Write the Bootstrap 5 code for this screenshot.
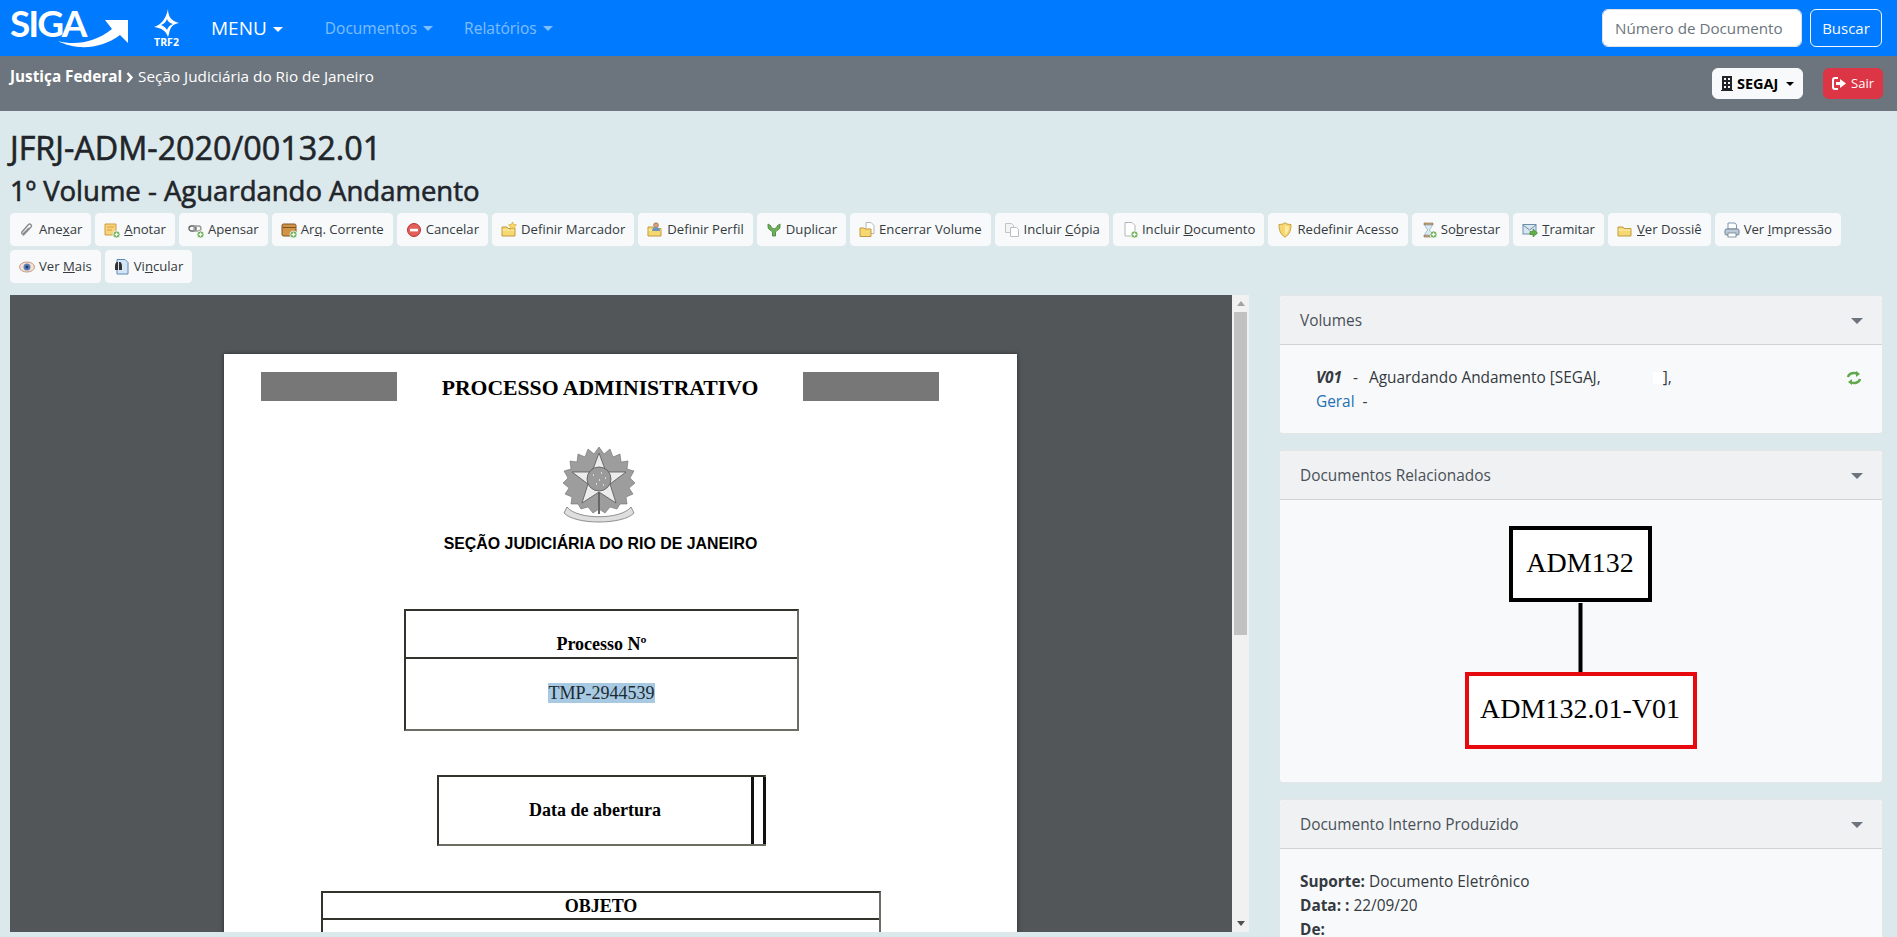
<!DOCTYPE html>
<html lang="pt-BR">
<head>
    <meta charset="UTF-8">
    <meta name="viewport" content="width=device-width, initial-scale=1.0">
    <title>SIGA - Volume</title>
    <link href="https://cdn.jsdelivr.net/npm/bootstrap@5.3.0/dist/css/bootstrap.min.css" rel="stylesheet">
    <style>
        html, body { height: 100%; overflow: hidden; }
        body { background: #dbe8ec; font-family: "Open Sans", "Noto Sans", sans-serif; font-size: 15.4px; line-height: 24px; color: #212529; }

        /* barra superior */
        .topo { height: 56px; background: #007bff; padding: 0 15px 0 10px; }
        .logo-siga { position: relative; width: 120px; height: 50px; color: #fff; }
        .logo-siga span { display: block; font-family: Lato, sans-serif; font-size: 37px; line-height: 38px; font-weight: 700; letter-spacing: -2px; margin-top: 1px; }
        .logo-siga svg { position: absolute; left: 0; top: 0; }
        .topo .nav-link { padding: 0; font-size: 15.5px; color: rgba(255,255,255,.5); }
        .topo .dropdown-toggle::after { margin-left: 6px; border-width: 5.500px 5.500px 0; vertical-align: 3px; }
        .topo .menu-link { font-size: 19px; color: #fff; }
        .topo .form-control { width: 200px; height: 38px; font-size: 15.2px; padding: 6px 12px; }
        .topo .form-control::placeholder { color: #6c757d; }
        .topo .btn { height: 38px; width: 72px; font-size: 15px; padding: 0; }

        .faixa { height: 55px; background: #6c757d; color: #fff; padding: 12px 14px 0 10px; font-size: 15.3px; }
        .faixa .local { margin-top: -2px; line-height: 21px; }
        .faixa .btn { height: 31px; font-size: 13px; padding: 0 8px; display: inline-flex; align-items: center; gap: 4px; }
        .faixa .btn-light { font-size: 14.5px; }

        /* conteudo */
        .principal { padding: 17px 14px 0 10px; }
        .principal h2 { font-size: 32.3px; line-height: 38px; font-weight: 400; -webkit-text-stroke: .6px #212529; margin-bottom: 8px; }
        .principal h3 { font-size: 27.500px; line-height: 34px; font-weight: 400; -webkit-text-stroke: .6px #212529; margin-bottom: 5px; }
        .acoes { gap: 4px; margin-bottom: 12px; }
        .acoes .btn { height: 33px; padding: 0 8px; font-size: 13.15px; line-height: 31px; background: #f8f9fa; border-color: #f8f9fa; color: #343a40; border-radius: 4px; display: inline-flex; align-items: center; gap: 4px; }
        .acoes svg { width: 16px; height: 16px; flex: none; }

        .corpo { gap: 30px; }
        .visor { flex: 1; height: 637px; overflow: hidden; }
        .visor-pdf { flex: 1; background: #525659; padding: 59px 0 0 214px; overflow: hidden; }
        .barra { width: 17px; background: #f1f1f1; }
        .barra i { display: block; width: 13px; height: 323px; margin: 0 2px; background: #c1c1c1; }
        .seta { height: 17px; flex: none; }
        .seta::before { content: ""; border: 4px solid transparent; }
        .seta-cima::before { border-top: 0; border-bottom: 5px solid #a3a3a3; }
        .seta-baixo::before { border-bottom: 0; border-top: 5px solid #505050; }

        .folha { width: 793px; height: 800px; background: #fff; padding-top: 18px; font-family: "Liberation Serif", serif; font-weight: 700; color: #000; box-shadow: 0 0 4px rgba(0,0,0,.5); }
        .folha-cab { padding: 0 77px 0 37px; height: 29px; }
        .folha-cab i { display: block; width: 136px; height: 29px; background: #777; flex: none; }
        .folha-cab span { font-size: 21.7px; line-height: 32px; width: 406px; text-align: center; flex: none; }
        .brasao { display: block; margin: 46px 0 0 339px; }
        .secao { width: 753px; text-align: center; font-family: "Liberation Sans", sans-serif; font-size: 15.9px; line-height: 20px; margin-top: 11px; }
        .caixa { border: 2px solid #33332c; border-right-color: #6d6d64; border-bottom-color: #6d6d64; text-align: center; font-size: 18px; }
        .caixa-numero { width: 395px; height: 122px; margin: 55px 0 0 180px; }
        .caixa-numero div:first-child { height: 48px; padding-top: 20px; line-height: 26px; border-bottom: 2px solid #33332c; }
        .caixa-numero div:last-child { padding-top: 22px; line-height: 24px; font-weight: 400; }
        .caixa-numero mark { padding: 0; background: #a7c9e2; color: #1c2b33; }
        .caixa-data { width: 329px; height: 71px; margin: 44px 0 0 213px; }
        .caixa-data div { width: 315px; height: 67px; line-height: 67px; border-right: 3px solid #111; }
        .caixa-data b { display: block; width: 12px; margin-left: 315px; margin-top: -67px; height: 67px; border-right: 3px solid #111; }
        .caixa-objeto { width: 560px; margin: 45px 0 0 97px; }
        .caixa-objeto div:first-child { height: 27px; line-height: 27px; border-bottom: 2px solid #33332c; }
        .caixa-objeto div:last-child { height: 80px; }

        /* coluna lateral */
        .lateral { width: 604px; flex: none; }
        .cartao { background: #f8f9fa; border-color: rgba(0,0,0,.08); border-radius: 4px; margin-bottom: 16px; }
        .cartao .card-header { height: 49px; padding: 13px 20px 11px; line-height: 24px; background: #f0f1f3; border-bottom-color: rgba(0,0,0,.125); color: #495057; display: flex; justify-content: space-between; align-items: center; }
        .cartao .card-header::after { content: ""; border: 6px solid transparent; border-top: 6px solid #6c757d; border-bottom: 0; margin-right: -1px; }
        .cartao .card-body { padding: 21px 20px 19px; color: #343a40; }
        .volume { padding-left: 16px; }
        .volume a { text-decoration: none; color: #2470b3; }
        .volume .traco { margin: 0 11px; }
        .tarja { display: inline-block; width: 10px; height: 12px; background: #fff; margin-left: 52px; vertical-align: -1px; }
        .grafo text { font-family: "Liberation Serif", serif; font-size: 28px; text-anchor: middle; fill: #000; }
        .grafo-corpo { height: 282px; padding: 0 !important; }
    </style>
</head>
<body>
    <nav class="topo d-flex align-items-center">
        <div class="logo-siga">
            <span>SIGA</span>
            <svg width="120" height="50" viewBox="10 3 120 50">
                <path fill="#fff" d="M58 41C76 46 96 42 112 29L105 20H128V43L120 35C100 50 75 50 58 41Z"/>
            </svg>
        </div>
        <svg width="30" height="44" viewBox="151 7 30 44" style="margin-left:22px">
            <path fill="#fff" fill-rule="evenodd" d="M167 10C167 17 170 22 178 24C172 25 169 28 168 35L167 38C165 32 161 29 153 28C160 26 165 20 167 10ZM166 20C165 23 163 25 160 26C163 27 165 29 166 31C167 28 169 26 172 25C169 24 167 23 166 20Z"/>
            <text x="165.500" y="47" font-size="10.500" font-weight="700" fill="#fff" text-anchor="middle" font-family="Open Sans, sans-serif">TRF2</text>
        </svg>
        <a class="nav-link menu-link dropdown-toggle" href="#" style="margin-left:29px">MENU</a>
        <a class="nav-link dropdown-toggle" href="#" style="margin-left:42px">Documentos</a>
        <a class="nav-link dropdown-toggle" href="#" style="margin-left:31px">Relatórios</a>
        <form class="d-flex gap-2 ms-auto">
            <input class="form-control" type="text" placeholder="Número de Documento">
            <button class="btn btn-outline-light" type="button">Buscar</button>
        </form>
    </nav>

    <div class="faixa d-flex justify-content-between align-items-start">
        <div class="local">
            <strong>Justiça Federal</strong>
            <svg width="8" height="11" viewBox="0 0 8 11"><path d="M1.500 1l4 4.500-4 4.500" fill="none" stroke="#fff" stroke-width="2.400"/></svg>
            Seção Judiciária do Rio de Janeiro
        </div>
        <div class="d-flex" style="gap:20px">
            <button class="btn btn-light dropdown-toggle fw-bold" type="button">
                <svg width="12" height="15" viewBox="0 0 12 15"><path fill="#212529" fill-rule="evenodd" d="M1 0h10v14h1v1H0v-1h1zM3 2v2h2V2zm4 0v2h2V2zM3 6v2h2V6zm4 0v2h2V6zM3 10v2h2v-2zm4 0v2h2v-2z"/></svg>
                SEGAJ
            </button>
            <button class="btn btn-danger" type="button">
                <svg width="15" height="13" viewBox="0 0 15 13"><path fill="#fff" d="M6 0H3a3 3 0 0 0-3 3v7a3 3 0 0 0 3 3h3v-2H3a1 1 0 0 1-1-1V3a1 1 0 0 1 1-1h3zM8 2v3H4v3h4v3l6-4.500z"/></svg>
                Sair
            </button>
        </div>
    </div>

    <main class="principal">
        <h2>JFRJ-ADM-2020/00132.01</h2>
        <h3>1º Volume - Aguardando Andamento</h3>

        <svg width="0" height="0" class="position-absolute">
            <defs>
                <g id="mais"><circle cx="12.500" cy="12.500" r="3.500" fill="#5aa845" stroke="#fff" stroke-width=".8"/><path d="M12.500 10.500v4M10.500 12.500h4" stroke="#fff" stroke-width="1.300"/></g>
                <g id="pasta"><path d="M1 5h5l1 1.500h7V14H1z" fill="#f6d873" stroke="#c39a3f"/><path d="M1.500 8h12" stroke="#fbeeb5"/></g>
            </defs>
        </svg>

        <div class="acoes d-flex flex-wrap">
            <a class="btn" href="#"><svg viewBox="0 0 16 16"><path d="M4 13.500 12 5c1.500-2-1-4-2.500-2.500L3 10c-1 1.500.5 2.500 1.500 1.500L10 6" fill="none" stroke="#8a8a8a" stroke-width="1.400"/></svg><span>Ane<u>x</u>ar</span></a>
            <a class="btn" href="#"><svg viewBox="0 0 16 16"><path d="M1 2h11v11H1z" fill="#f7d47f" stroke="#cd9c3e"/><path d="M3 5h7M3 8h5" stroke="#d99f3c"/><use href="#mais"/></svg><span><u>A</u>notar</span></a>
            <a class="btn" href="#"><svg viewBox="0 0 16 16"><rect x="1" y="4" width="7" height="5" rx="2.500" fill="none" stroke="#666" stroke-width="1.400"/><rect x="6" y="4" width="7" height="5" rx="2.500" fill="none" stroke="#999" stroke-width="1.400"/><use href="#mais"/></svg>Apensar</a>
            <a class="btn" href="#"><svg viewBox="0 0 16 16"><rect x="1" y="2" width="14" height="12" rx="1.500" fill="#cf9445" stroke="#7f5420"/><path d="M1.500 5.500h13" stroke="#7f5420"/><use href="#mais"/></svg><span>Ar<u>q</u>. Corrente</span></a>
            <a class="btn" href="#"><svg viewBox="0 0 16 16"><circle cx="8" cy="8" r="6.500" fill="#e2605a" stroke="#b8352f"/><rect x="4" y="6.800" width="8" height="2.600" fill="#fff"/></svg>Cancelar</a>
            <a class="btn" href="#"><svg viewBox="0 0 16 16"><use href="#pasta"/><path d="M11.500 0l1.200 2.500 2.800.4-2 1.900.5 2.700-2.500-1.300L9 7.500l.5-2.700-2-1.900 2.800-.4z" fill="#fbd95e" stroke="#cb9c2c" stroke-width=".6"/></svg>Definir Marcador</a>
            <a class="btn" href="#"><svg viewBox="0 0 16 16"><use href="#pasta"/><circle cx="9" cy="3.200" r="2.400" fill="#d8a27a" stroke="#8d5c3a" stroke-width=".6"/><path d="M5 9c0-3 2-4 4-4s4 1 4 4z" fill="#6d93b8"/></svg>Definir Perfil</a>
            <a class="btn" href="#"><svg viewBox="0 0 16 16"><path d="M2 2v3c0 3 3.500 3 4.500 5v4h3v-4c1-2 4.500-2 4.500-5V2l-3 2v1c0 1-2 1-3 2-1-1-3-1-3-2V4z" fill="#6db35a" stroke="#437d35" stroke-width=".8"/></svg>Duplicar</a>
            <a class="btn" href="#"><svg viewBox="0 0 16 16"><path d="M7 0.500h5l3 3v8H7z" fill="#fff" stroke="#b7b7b7"/><path d="M1 6h4l1 1h6v7.500H1z" fill="#f6d873" stroke="#c39a3f"/></svg>Encerrar Volume</a>
            <a class="btn" href="#"><svg viewBox="0 0 16 16"><path d="M1.500 1.500h6l2 2v7h-8z" fill="#f4f4f4" stroke="#c4c4c4"/><path d="M6.500 5.500h6l2 2v7h-8z" fill="#fff" stroke="#bdbdbd"/></svg><span>Incluir <u>C</u>ópia</span></a>
            <a class="btn" href="#"><svg viewBox="0 0 16 16"><path d="M3 .500h7l3 3V14H3z" fill="#fff" stroke="#b5b5b5"/><use href="#mais"/></svg><span>Incluir <u>D</u>ocumento</span></a>
            <a class="btn" href="#"><svg viewBox="0 0 16 16"><path d="M8 .800c2 1.500 4 1.700 6 1.700 0 5-1 9.500-6 12.700-5-3.200-6-7.700-6-12.700 2 0 4-.2 6-1.700z" fill="#f5d671" stroke="#c9a13e"/><path d="M8 3v10c3-2.200 3.800-5 4-8.500-1.500 0-2.800-.4-4-1.500z" fill="#fbeaa8"/></svg>Redefinir Acesso</a>
            <a class="btn" href="#"><svg viewBox="0 0 16 16"><path d="M3 1h9v2H3zM3 13h9v2H3z" fill="#c9a37a" stroke="#8b6b48" stroke-width=".6"/><path d="M4 3h7c0 3-2.500 3.500-2.500 5S11 10 11 13H4c0-3 2.500-3.500 2.500-5S4 6 4 3z" fill="#dbe9f2" stroke="#8fa9bd" stroke-width=".7"/><use href="#mais"/></svg><span>So<u>b</u>restar</span></a>
            <a class="btn" href="#"><svg viewBox="0 0 16 16"><rect x="1" y="2.500" width="13" height="9.500" fill="#d7e6f1" stroke="#6f8ea7"/><path d="M1 3l6.500 5L14 3" fill="none" stroke="#6f8ea7"/><path d="M8 9.500h3V7l4.500 4L11 15v-2.500H8z" fill="#62b04c" stroke="#3d7d2c" stroke-width=".6"/></svg><span><u>T</u>ramitar</span></a>
            <a class="btn" href="#"><svg viewBox="0 0 16 16"><use href="#pasta"/></svg><span><u>V</u>er Dossiê</span></a>
            <a class="btn" href="#"><svg viewBox="0 0 16 16"><path d="M4 1h7l1.500 2v4H4z" fill="#fff" stroke="#7d97b3"/><rect x="1" y="7" width="14" height="6" rx="1.500" fill="#bcc9d6" stroke="#6e7f90"/><rect x="4" y="11" width="8" height="4" fill="#fff" stroke="#6e7f90" stroke-width=".8"/></svg><span>Ver <u>I</u>mpressão</span></a>
            <a class="btn" href="#"><svg viewBox="0 0 16 16"><ellipse cx="8" cy="8" rx="7.500" ry="5" fill="#f4e2d6" stroke="#c49a83"/><circle cx="8" cy="8" r="3.500" fill="#5b7fb8"/><circle cx="8" cy="8" r="1.500" fill="#1f3864"/></svg><span>Ver <u>M</u>ais</span></a>
            <a class="btn" href="#"><svg viewBox="0 0 16 16"><path d="M3 .500h8l3 3V15H3z" fill="#d4e5f6" stroke="#5d8ab8"/><path d="M1 7c0-2 1-4 2-4h1v8H1zM5 3h1c1 0 2 2 2 4v4H5z" fill="#333"/></svg><span>Vi<u>n</u>cular</span></a>
        </div>

        <div class="corpo d-flex align-items-start">
            <div class="visor d-flex">
                <div class="visor-pdf">
                    <div class="folha">
                        <div class="folha-cab d-flex">
                            <i></i>
                            <span>PROCESSO ADMINISTRATIVO</span>
                            <i></i>
                        </div>
                        <svg class="brasao" width="72" height="76" viewBox="0 0 72 76">
                            <polygon fill="#9d9d9d" stroke="#6f6f6f" stroke-width=".6" points="36,0 41,7 47,2 50,10 57,7 58,15 65,14 64,22 71,24 67,31 72,36 66,41 70,47 63,50 64,57 57,57 54,62 47,60 42,66 36,62 30,66 25,60 18,62 15,57 8,57 9,50 2,47 6,41 0,36 5,31 1,24 8,22 7,14 14,15 15,7 22,10 25,2 31,7"/>
                            <polygon fill="#ececec" stroke="#555" stroke-width=".8" points="36,6 43,25 63,25 47,37 53,56 36,45 19,56 25,37 9,25 29,25"/>
                            <circle cx="36" cy="32" r="12" fill="#9a9a9a" stroke="#555" stroke-width=".8"/>
                            <path d="M30 28h1M38 26h1M42 31h1M36 33h1M33 37h1M40 38h1" stroke="#eee" stroke-width="1.500"/>
                            <path d="M36 45v22" stroke="#666" stroke-width="2"/>
                            <path d="M4 60c10 13 54 13 64 0l3 6C60 78 12 78 1 66z" fill="#dedede" stroke="#777" stroke-width=".8"/>
                        </svg>
                        <div class="secao">SEÇÃO JUDICIÁRIA DO RIO DE JANEIRO</div>
                        <div class="caixa caixa-numero">
                            <div>Processo Nº</div>
                            <div><mark>TMP-2944539</mark></div>
                        </div>
                        <div class="caixa caixa-data">
                            <div>Data de abertura</div>
                            <b></b>
                        </div>
                        <div class="caixa caixa-objeto">
                            <div>OBJETO</div>
                            <div></div>
                        </div>
                    </div>
                </div>
                <div class="barra d-flex flex-column">
                    <div class="seta seta-cima d-flex align-items-center justify-content-center"></div>
                    <i></i>
                    <div class="seta seta-baixo d-flex align-items-center justify-content-center mt-auto"></div>
                </div>
            </div>

            <aside class="lateral">
                <div class="card cartao">
                    <div class="card-header">Volumes</div>
                    <div class="card-body d-flex justify-content-between align-items-start">
                        <div class="volume">
                            <b><i>V01</i></b><span class="traco">-</span>Aguardando Andamento [SEGAJ,<span class="tarja"></span>],<br>
                            <a href="#">Geral</a> &nbsp;-
                        </div>
                        <svg width="16" height="16" viewBox="0 0 16 16" class="mt-1">
                            <path d="M2 7c1-4 6-5 10-3M14 9c-1 4-6 5-10 3" fill="none" stroke="#5fa84c" stroke-width="2.400"/>
                            <path d="M10 1l4 3-4 3zM6 9l-4 3 4 3z" fill="#5fa84c"/>
                        </svg>
                    </div>
                </div>

                <div class="card cartao">
                    <div class="card-header">Documentos Relacionados</div>
                    <div class="card-body grafo-corpo">
                        <svg class="grafo d-block" width="602" height="282" viewBox="0 0 602 282">
                            <path d="M300.500 103V174" stroke="#000" stroke-width="4"/>
                            <rect x="231" y="28" width="139" height="72" fill="#fff" stroke="#000" stroke-width="4"/>
                            <text x="300" y="72">ADM132</text>
                            <rect x="187" y="174" width="228" height="73" fill="#fff" stroke="#e8090f" stroke-width="4"/>
                            <text x="300" y="218">ADM132.01-V01</text>
                        </svg>
                    </div>
                </div>

                <div class="card cartao">
                    <div class="card-header">Documento Interno Produzido</div>
                    <div class="card-body">
                        <b>Suporte:</b> Documento Eletrônico<br>
                        <b>Data: :</b> 22/09/20<br>
                        <b>De:</b>
                    </div>
                </div>
            </aside>
        </div>
    </main>

    <script src="https://cdn.jsdelivr.net/npm/bootstrap@5.3.0/dist/js/bootstrap.bundle.min.js"></script>
</body>
</html>
